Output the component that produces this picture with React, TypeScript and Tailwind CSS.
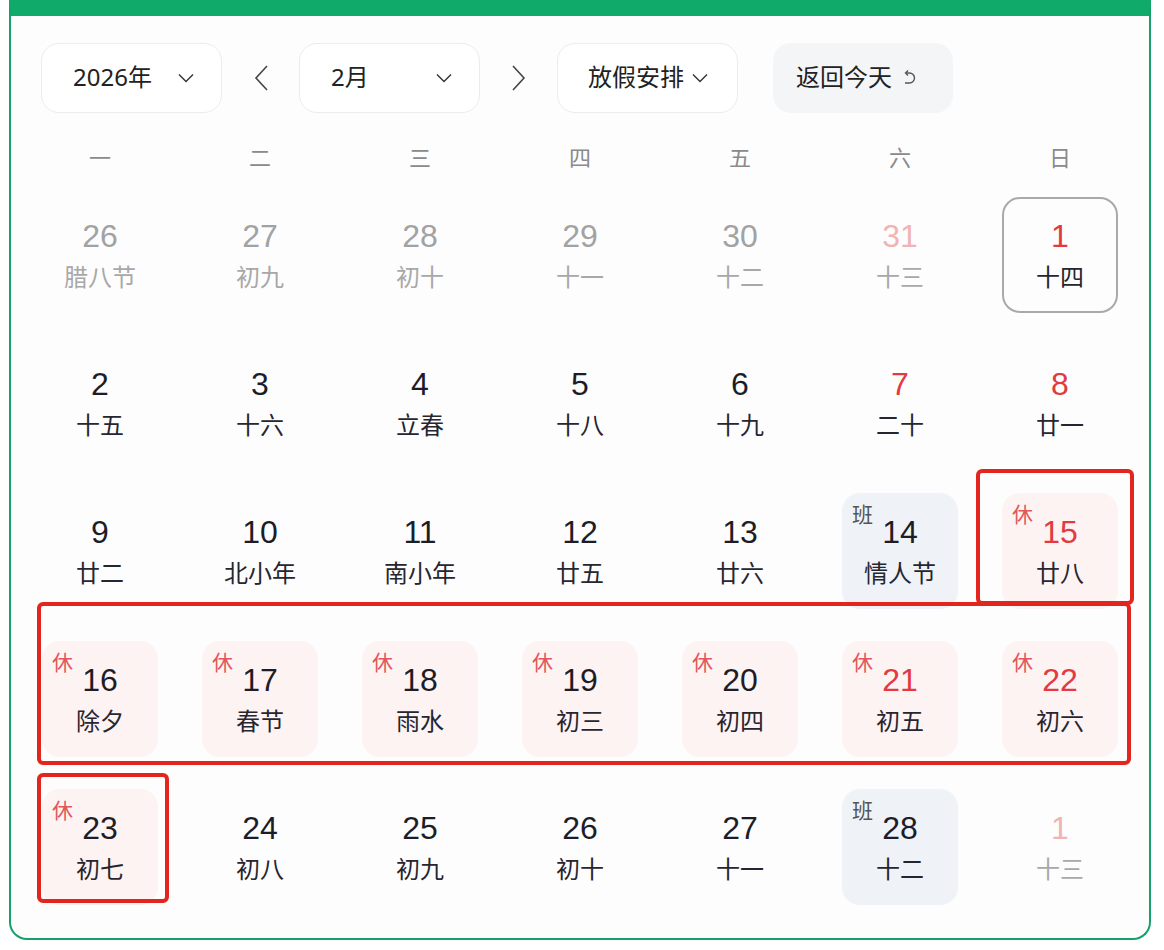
import React from "react";

type Day = {
  n: number;
  lunar: string;
  tone?: "muted" | "mutedRed" | "red" | "normal";
  tag?: "休" | "班";
  selected?: boolean;
};

const weekNames = ["一", "二", "三", "四", "五", "六", "日"];

const days: Day[] = [
  { n: 26, lunar: "腊八节", tone: "muted" },
  { n: 27, lunar: "初九", tone: "muted" },
  { n: 28, lunar: "初十", tone: "muted" },
  { n: 29, lunar: "十一", tone: "muted" },
  { n: 30, lunar: "十二", tone: "muted" },
  { n: 31, lunar: "十三", tone: "mutedRed" },
  { n: 1, lunar: "十四", tone: "red", selected: true },
  { n: 2, lunar: "十五" },
  { n: 3, lunar: "十六" },
  { n: 4, lunar: "立春" },
  { n: 5, lunar: "十八" },
  { n: 6, lunar: "十九" },
  { n: 7, lunar: "二十", tone: "red" },
  { n: 8, lunar: "廿一", tone: "red" },
  { n: 9, lunar: "廿二" },
  { n: 10, lunar: "北小年" },
  { n: 11, lunar: "南小年" },
  { n: 12, lunar: "廿五" },
  { n: 13, lunar: "廿六" },
  { n: 14, lunar: "情人节", tag: "班" },
  { n: 15, lunar: "廿八", tone: "red", tag: "休" },
  { n: 16, lunar: "除夕", tag: "休" },
  { n: 17, lunar: "春节", tag: "休" },
  { n: 18, lunar: "雨水", tag: "休" },
  { n: 19, lunar: "初三", tag: "休" },
  { n: 20, lunar: "初四", tag: "休" },
  { n: 21, lunar: "初五", tone: "red", tag: "休" },
  { n: 22, lunar: "初六", tone: "red", tag: "休" },
  { n: 23, lunar: "初七", tag: "休" },
  { n: 24, lunar: "初八" },
  { n: 25, lunar: "初九" },
  { n: 26, lunar: "初十" },
  { n: 27, lunar: "十一" },
  { n: 28, lunar: "十二", tag: "班" },
  { n: 1, lunar: "十三", tone: "mutedRed" },
];

function Chevron({ className = "" }: { className?: string }) {
  return (
    <svg width="16" height="10" viewBox="0 0 16 10" className={className}>
      <polyline points="1,1.5 8,8.5 15,1.5" fill="none" stroke="#333" strokeWidth="1.4" />
    </svg>
  );
}

function Arrow({ dir }: { dir: "left" | "right" }) {
  return (
    <svg width="14" height="26" viewBox="0 0 14 26">
      <polyline
        points={dir === "left" ? "13,1 2,13 13,25" : "1,1 12,13 1,25"}
        fill="none"
        stroke="#444"
        strokeWidth="1.6"
      />
    </svg>
  );
}

function Cell({ d }: { d: Day }) {
  const numColor =
    d.tone === "muted"
      ? "text-[#a2a2a2]"
      : d.tone === "mutedRed"
      ? "text-[#f0b4b4]"
      : d.tone === "red"
      ? "text-[#e23a3f]"
      : "text-[#1d1d28]";
  const lunarColor =
    d.tone === "muted" || d.tone === "mutedRed" ? "text-[#a8a8a8]" : "text-[#262630]";
  const bg =
    d.tag === "休" ? "bg-[#fdf3f3]" : d.tag === "班" ? "bg-[#eff2f7]" : "bg-transparent";
  const border = d.selected ? "border-2 border-[#a9a9ad]" : "";
  return (
    <div className="flex justify-center">
      <div className={`relative w-[116px] h-[116px] rounded-[18px] flex flex-col items-center ${bg} ${border} ${d.selected ? "pt-[19px]" : "pt-[21px]"}`}>
        {d.tag && (
          <span
            className={`absolute left-[10px] top-[9px] text-[21px] leading-[24px] ${
              d.tag === "休" ? "text-[#e0575c]" : "text-[#555]"
            }`}
          >
            {d.tag}
          </span>
        )}
        <div className={`font-['Liberation_Sans',sans-serif] text-[32px] leading-[36px] ${numColor}`}>{d.n}</div>
        <div className={`mt-[8px] text-[24px] leading-[30px] ${lunarColor}`}>{d.lunar}</div>
      </div>
    </div>
  );
}

export default function App() {
  return (
    <div
      className="w-[1164px] h-[950px] bg-white pl-[9px]"
      style={{ fontFamily: '"Noto Sans", "Noto Sans CJK SC", sans-serif' }}
    >
      <div className="relative w-[1142px] h-[940px] border-2 border-t-[16px] border-[#16a06c] border-t-[#10aa6a] rounded-b-[18px] bg-[#fdfdfe]">
        {/* toolbar */}
        <div className="flex items-center pl-[30px] pt-[27px] text-[#222] text-[24px]">
          <div className="w-[181px] h-[70px] rounded-[18px] border border-[#ececee] bg-white flex items-center justify-between pl-[31px] pr-[27px]">
            <span className="-mt-[2px]">2026年</span>
            <Chevron />
          </div>
          <div className="w-[77px] flex justify-center">
            <Arrow dir="left" />
          </div>
          <div className="w-[181px] h-[70px] rounded-[18px] border border-[#ececee] bg-white flex items-center justify-between pl-[31px] pr-[27px]">
            <span className="-mt-[2px]">2月</span>
            <Chevron />
          </div>
          <div className="w-[77px] flex justify-center">
            <Arrow dir="right" />
          </div>
          <div className="w-[181px] h-[70px] rounded-[18px] border border-[#ececee] bg-white flex items-center pl-[30px] gap-[8px]">
            <span className="-mt-[2px]">放假安排</span>
            <Chevron />
          </div>
          <div className="ml-[35px] w-[180px] h-[70px] rounded-[18px] bg-[#f4f5f7] flex items-center pl-[23px] gap-[10px]">
            <span className="-mt-[2px]">返回今天</span>
            <svg width="14" height="16" viewBox="0 0 14 16">
              <path d="M4 3 H7.5 A5 5 0 0 1 7.5 13 H3" fill="none" stroke="#555" strokeWidth="1.4" />
              <polyline points="6,0.5 3.5,3 6,5.5" fill="none" stroke="#555" strokeWidth="1.4" />
            </svg>
          </div>
        </div>

        {/* weekday header */}
        <div className="ml-[9px] w-[1120px] grid grid-cols-7 mt-[24px] h-[40px] items-center">
          {weekNames.map((w) => (
            <div key={w} className="text-center text-[22px] text-[#8a8a8a]">
              {w}
            </div>
          ))}
        </div>

        {/* days */}
        <div className="ml-[9px] w-[1120px] grid grid-cols-7 gap-y-[32px] mt-[20px]">
          {days.map((d, i) => (
            <Cell key={i} d={d} />
          ))}
        </div>

        {/* red annotation frames */}
        <div className="absolute left-[965px] top-[453px] w-[158px] h-[136px] border-[4px] border-[#e3261d] rounded-[6px]" />
        <div className="absolute left-[26px] top-[586px] w-[1094px] h-[163px] border-[4px] border-[#e3261d] rounded-[6px]" />
        <div className="absolute left-[26px] top-[757px] w-[132px] h-[130px] border-[4px] border-[#e3261d] rounded-[6px]" />
      </div>
    </div>
  );
}
